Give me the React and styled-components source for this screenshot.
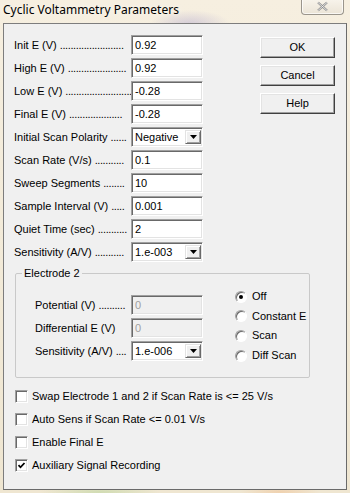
import React from "react";
import styled, { createGlobalStyle } from "styled-components";

const Global = createGlobalStyle`
  html, body { margin: 0; padding: 0; }
  body { width: 350px; height: 493px; overflow: hidden; }
`;

const Window = styled.div`
  width: 350px;
  height: 493px;
  display: flex;
  flex-direction: column;
  box-sizing: border-box;
  background:
    radial-gradient(ellipse 40px 14px at 190px 24px, rgba(150,140,200,0.35), transparent),
    radial-gradient(ellipse 60px 6px at 100px 492px, rgba(150,200,120,0.35), transparent),
    radial-gradient(ellipse 40px 6px at 280px 492px, rgba(240,170,110,0.35), transparent),
    linear-gradient(#f6efe0, #efe6d1);
  font-family: "Liberation Sans", Arial, sans-serif;
`;

const TitleBar = styled.div`
  height: 23px;
  display: flex;
  justify-content: space-between;
  align-items: flex-start;
  padding: 0 6px 0 3px;
  flex-shrink: 0;
`;

const Title = styled.div`
  font-family: "Noto Sans", "Open Sans", sans-serif;
  font-size: 12px;
  line-height: 16px;
  padding-top: 2px;
  color: #000;
  text-shadow: 0 0 6px rgba(255,255,255,0.9);
`;

const CloseBtn = styled.div`
  width: 43px;
  height: 16px;
  margin-top: -1px;
  box-sizing: border-box;
  border: 1px solid #9a958c;
  border-top: none;
  border-radius: 0 0 4px 4px;
  background: linear-gradient(#f8f4ec, #ebe4d6);
  box-shadow: inset 0 0 0 1px rgba(255,255,255,0.7);
  display: flex;
  align-items: center;
  justify-content: center;
`;

const Client = styled.div`
  flex: 1;
  margin: 0 3px 3px 3px;
  border: 1px solid #7d7d7d;
  border-right-color: #6a6a6a;
  border-bottom-color: #6a6a6a;
  background: #f0f0f0;
  display: flex;
  flex-direction: column;
  font-size: 11px;
  color: #000;
`;

const Top = styled.div`
  display: flex;
  padding: 11px 11px 0 10px;
`;

const FormCol = styled.div`
  display: flex;
  flex-direction: column;
  gap: 3px;
`;

const Row = styled.div`
  display: flex;
  align-items: center;
  height: 20px;
`;

const Label = styled.div`
  width: ${(p) => p.$w || 117}px;
  display: flex;
  white-space: nowrap;
  line-height: 13px;
  box-sizing: border-box;
`;

const Dots = styled.span`
  letter-spacing: -0.4px;
  margin-left: 3px;
`;

const Field = styled.div`
  width: 72px;
  height: 20px;
  box-sizing: border-box;
  border-top: 1px solid #a0a0a0;
  border-left: 1px solid #a0a0a0;
  border-right: 1px solid #ffffff;
  border-bottom: 1px solid #ffffff;
  box-shadow: inset 1px 1px 0 #696969, inset -1px -1px 0 #e3e3e3;
  background: ${(p) => (p.$disabled ? "#f0f0f0" : "#fff")};
  color: ${(p) => (p.$disabled ? "#a0a0a0" : "#000")};
  padding: 0 0 0 3px;
  line-height: 13px;
  display: flex;
  align-items: center;
  justify-content: space-between;
`;

const ArrowBtn = styled.div`
  width: 16px;
  height: 14px;
  margin: 0 1px 0 0;
  box-sizing: border-box;
  background: #f0f0f0;
  border-top: 1px solid #e3e3e3;
  border-left: 1px solid #e3e3e3;
  border-right: 1px solid #696969;
  border-bottom: 1px solid #696969;
  box-shadow: inset 1px 1px 0 #fff, inset -1px -1px 0 #a0a0a0;
  display: flex;
  align-items: center;
  justify-content: center;
`;

const BtnCol = styled.div`
  margin-left: auto;
  padding-top: 2px;
  display: flex;
  flex-direction: column;
  gap: 7px;
`;

const Button = styled.div`
  width: 75px;
  height: 21px;
  box-sizing: border-box;
  background: #f0f0f0;
  border-top: 1px solid #fff;
  border-left: 1px solid #fff;
  border-right: 1px solid #404040;
  border-bottom: 1px solid #404040;
  box-shadow: inset -1px -1px 0 #a0a0a0, inset 1px 1px 0 #e3e3e3;
  display: flex;
  align-items: center;
  justify-content: center;
  line-height: 13px;
`;

const Group = styled.fieldset`
  margin: 5px 0 0 11px;
  width: 295px;
  height: 111px;
  box-sizing: border-box;
  border: 1px solid #c9c9c9;
  border-radius: 2px;
  padding: 0;
  min-width: 0;
`;

const Legend = styled.legend`
  margin-left: 6px;
  padding: 0 2px;
  font-size: 11px;
  line-height: 13px;
`;

const GroupBody = styled.div`
  display: flex;
  padding: 7px 0 0 19px;
`;

const GroupForm = styled.div`
  display: flex;
  flex-direction: column;
  gap: 3px;
  padding-top: 8px;
`;

const RadioCol = styled.div`
  display: flex;
  flex-direction: column;
  margin-left: 32px;
`;

const RadioRow = styled.div`
  display: flex;
  align-items: center;
  height: 19.6px;
  gap: 5px;
`;

const RadioCircle = styled.div`
  width: 12px;
  height: 12px;
  box-sizing: border-box;
  border-radius: 50%;
  border: 1px solid;
  border-color: #a0a0a0 #fff #fff #a0a0a0;
  box-shadow: inset 1px 1px 0 #696969;
  background: #fff;
  display: flex;
  align-items: center;
  justify-content: center;
  &::after {
    content: "";
    width: 4px;
    height: 4px;
    border-radius: 50%;
    background: ${(p) => (p.$on ? "#000" : "transparent")};
  }
`;

const Checks = styled.div`
  display: flex;
  flex-direction: column;
  padding: 7px 0 0 11px;
`;

const CheckRow = styled.div`
  display: flex;
  align-items: center;
  height: 23px;
  gap: 4px;
`;

const CheckBox = styled.div`
  width: 13px;
  height: 13px;
  box-sizing: border-box;
  border-top: 1px solid #a0a0a0;
  border-left: 1px solid #a0a0a0;
  border-right: 1px solid #fff;
  border-bottom: 1px solid #fff;
  box-shadow: inset 1px 1px 0 #696969, inset -1px -1px 0 #e3e3e3;
  background: #fff;
  display: flex;
  align-items: center;
  justify-content: center;
`;

const Text = styled.span`
  line-height: 13px;
`;

const LabeledField = ({ label, dots = 0, w, children }) => (
  <Row>
    <Label $w={w}>
      <span>{label}</span>
      {dots > 0 && <Dots>{".".repeat(dots)}</Dots>}
    </Label>
    {children}
  </Row>
);

const Arrow = () => (
  <ArrowBtn>
    <svg width="7" height="4" viewBox="0 0 7 4">
      <path d="M0 0H7L3.5 4Z" fill="#000" />
    </svg>
  </ArrowBtn>
);

const Select = ({ value }) => (
  <Field>
    <span>{value}</span>
    <Arrow />
  </Field>
);

const Check = ({ on, children }) => (
  <CheckRow>
    <CheckBox>
      {on && (
        <svg width="9" height="9" viewBox="0 0 9 9">
          <path d="M1.5 4.2L3.5 6.3L7.5 2" stroke="#000" strokeWidth="1.8" fill="none" />
        </svg>
      )}
    </CheckBox>
    <Text>{children}</Text>
  </CheckRow>
);

const Radio = ({ on, children }) => (
  <RadioRow>
    <RadioCircle $on={on} />
    <Text>{children}</Text>
  </RadioRow>
);

export default function App() {
  return (
    <Window>
      <Global />
      <TitleBar>
        <Title>Cyclic Voltammetry Parameters</Title>
        <CloseBtn>
          <svg width="13" height="11" viewBox="0 0 13 11">
            <path d="M2 1.5L11 9.5M11 1.5L2 9.5" stroke="#8c8c8c" strokeWidth="2.2" fill="none" />
            <path d="M2 1.5L11 9.5M11 1.5L2 9.5" stroke="#f4f4f4" strokeWidth="0.8" fill="none" />
          </svg>
        </CloseBtn>
      </TitleBar>
      <Client>
        <Top>
          <FormCol>
            <LabeledField label="Init E (V)" dots={24}><Field>0.92</Field></LabeledField>
            <LabeledField label="High E (V)" dots={22}><Field>0.92</Field></LabeledField>
            <LabeledField label="Low E (V)" dots={25}><Field>-0.28</Field></LabeledField>
            <LabeledField label="Final E (V)" dots={20}><Field>-0.28</Field></LabeledField>
            <LabeledField label="Initial Scan Polarity" dots={6}><Select value="Negative" /></LabeledField>
            <LabeledField label="Scan Rate (V/s)" dots={11}><Field>0.1</Field></LabeledField>
            <LabeledField label="Sweep Segments" dots={8}><Field>10</Field></LabeledField>
            <LabeledField label="Sample Interval (V)" dots={5}><Field>0.001</Field></LabeledField>
            <LabeledField label="Quiet Time (sec)" dots={11}><Field>2</Field></LabeledField>
            <LabeledField label="Sensitivity (A/V)" dots={11}><Select value="1.e-003" /></LabeledField>
          </FormCol>
          <BtnCol>
            <Button>OK</Button>
            <Button>Cancel</Button>
            <Button>Help</Button>
          </BtnCol>
        </Top>
        <Group>
          <Legend>Electrode 2</Legend>
          <GroupBody>
            <GroupForm>
              <LabeledField label="Potential (V)" w={96} dots={10}><Field $disabled>0</Field></LabeledField>
              <LabeledField label="Differential E (V)" w={96}><Field $disabled>0</Field></LabeledField>
              <LabeledField label="Sensitivity (A/V)" w={96} dots={4}><Select value="1.e-006" /></LabeledField>
            </GroupForm>
            <RadioCol>
              <Radio on>Off</Radio>
              <Radio>Constant E</Radio>
              <Radio>Scan</Radio>
              <Radio>Diff Scan</Radio>
            </RadioCol>
          </GroupBody>
        </Group>
        <Checks>
          <Check>Swap Electrode 1 and 2 if Scan Rate is &lt;= 25 V/s</Check>
          <Check>Auto Sens if Scan Rate &lt;= 0.01 V/s</Check>
          <Check>Enable Final E</Check>
          <Check on>Auxiliary Signal Recording</Check>
        </Checks>
      </Client>
    </Window>
  );
}
